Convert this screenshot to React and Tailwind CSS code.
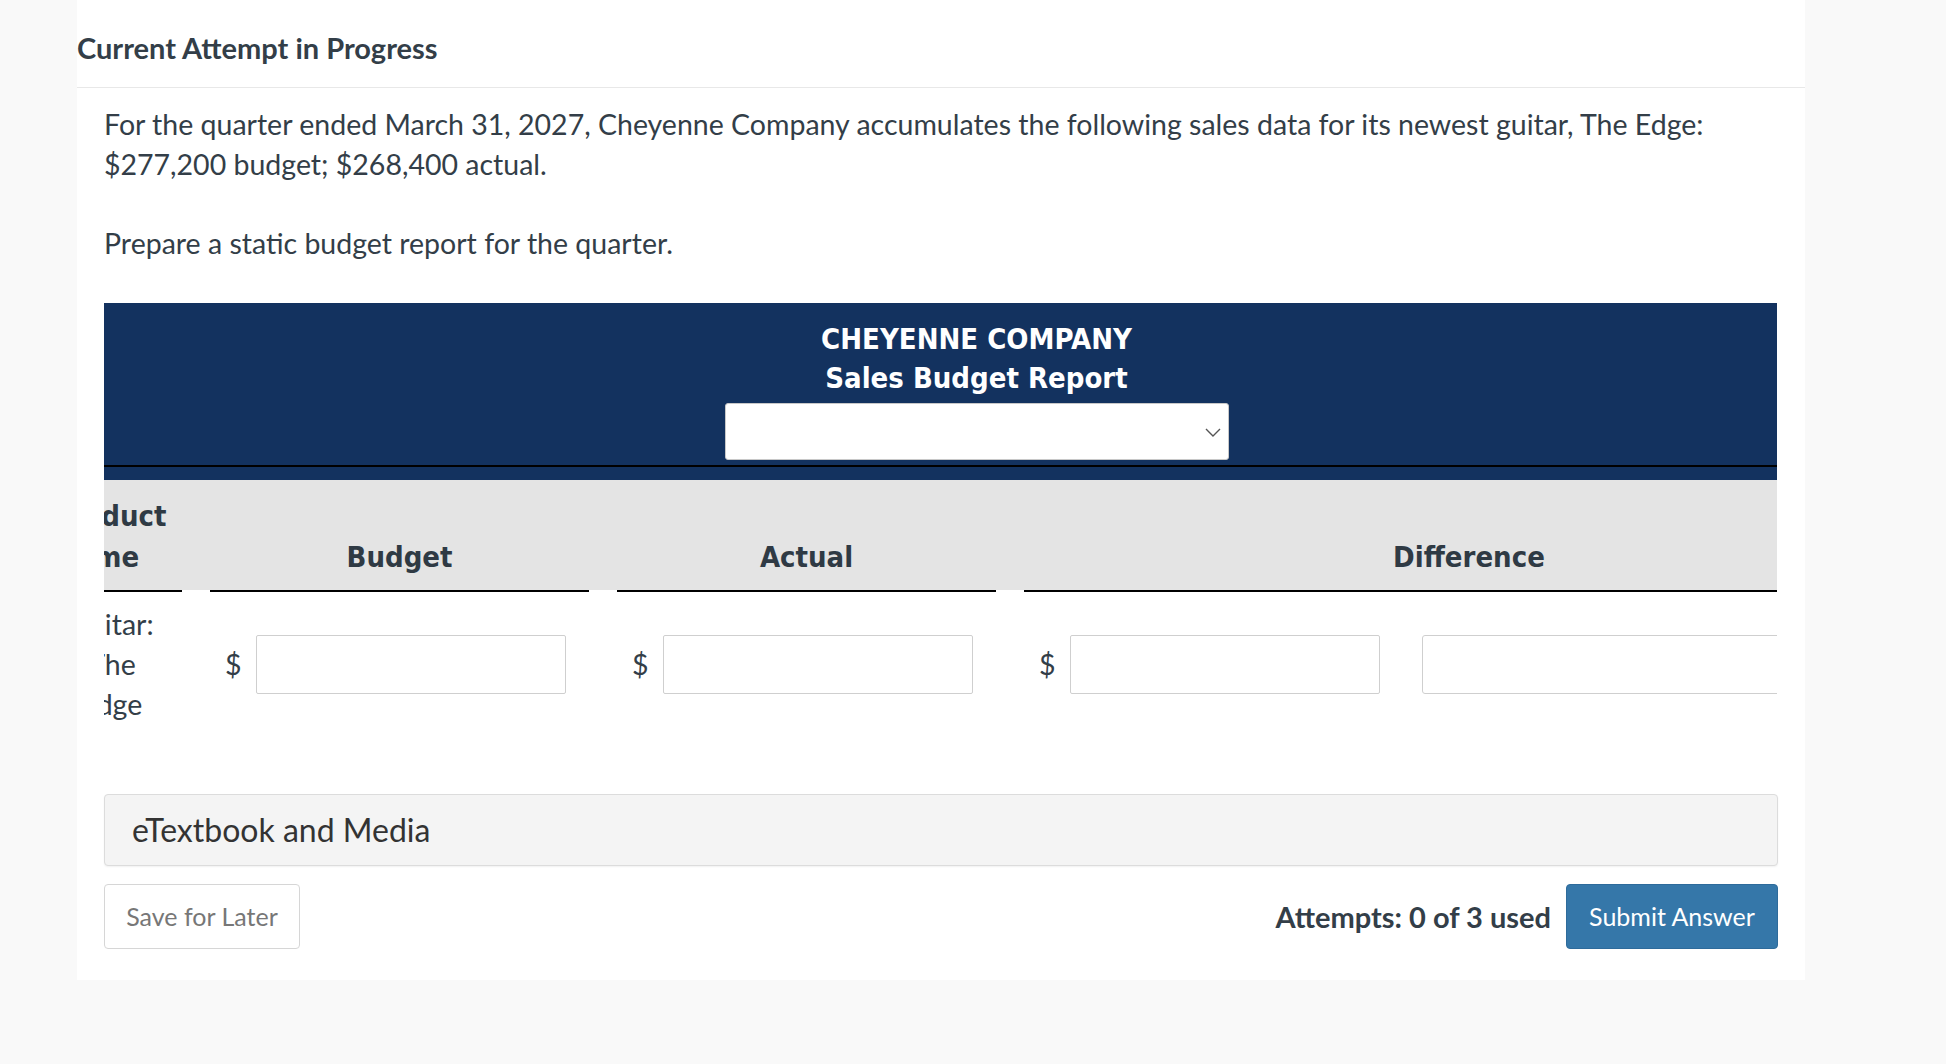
export default function App() {
  return (
    <div className="min-h-[1064px] bg-[#f9f9f9] font-['Lato',sans-serif] text-[#333e48]">
      <div className="ml-[77px] w-[1728px] bg-white pb-[31px]">
        <div className="h-[88px] border-b border-[#e8e8e8] pt-[31px]">
          <h2 className="text-[29px] font-bold leading-[34px]">Current Attempt in Progress</h2>
        </div>

        <div className="px-[27px] pt-[16px]">
          <p className="text-[28.5px] leading-[40px]">
            For the quarter ended March 31, 2027, Cheyenne Company accumulates the following sales data for its newest guitar, The Edge: $277,200 budget; $268,400 actual.
          </p>
          <p className="mt-[39px] text-[28.5px] leading-[40px]">Prepare a static budget report for the quarter.</p>

          <ReportTable />

          <div className="mt-[70px] flex h-[72px] items-center rounded-[4px] border border-[#dcdcdc] bg-[#f4f4f4] pl-[27px] shadow-[0_1px_2px_rgba(0,0,0,0.06)]">
            <span className="text-[32px] text-[#333]">eTextbook and Media</span>
          </div>

          <div className="mt-[18px] flex items-center justify-between">
            <button className="h-[65px] w-[196px] rounded-[4px] border border-[#d6d6d6] bg-white text-[25px] text-[#777]">
              Save for Later
            </button>
            <div className="flex items-center gap-[15px]">
              <span className="text-[29px] font-bold">Attempts: 0 of 3 used</span>
              <button className="h-[65px] w-[212px] rounded-[4px] border border-[#2e6b9b] bg-[#3577a9] text-[25px] text-white">
                Submit Answer
              </button>
            </div>
          </div>
        </div>
      </div>
    </div>
  );
}

function ReportTable() {
  const head = "font-['DejaVu_Sans',sans-serif] font-stretch-condensed font-bold text-[29px] leading-[41px] text-[#2f3a44]";
  return (
    <div className="mt-[40px] w-[1673px] overflow-hidden">
      <div className="bg-[#13325f] pb-[13px]">
        <div className="flex flex-col items-center border-b-2 border-black pb-[5px] pl-[72px] pt-[17px]">
          <div className="font-['DejaVu_Sans',sans-serif] font-stretch-condensed text-[29px] font-bold leading-[39px] text-white">
            CHEYENNE COMPANY
          </div>
          <div className="font-['DejaVu_Sans',sans-serif] font-stretch-condensed text-[29px] font-bold leading-[39px] text-white">
            Sales Budget Report
          </div>
          <div className="mt-[5px] flex h-[57px] w-[504px] items-center justify-end rounded-[3px] border border-[#c8c8c8] bg-white pr-[6px]">
            <svg width="18" height="12" viewBox="0 0 18 12" fill="none" stroke="#555" strokeWidth="1.4">
              <path d="M2 3l7 7 7-7" />
            </svg>
          </div>
        </div>
      </div>

      <div className="bg-[#e4e4e4] pb-[12px] pt-[16px]">
        <div className="grid grid-cols-[78px_379px_379px_890px] items-end gap-x-[28px]">
          <div className="overflow-hidden">
            <div className={`-ml-[76px] w-[154px] text-center ${head}`}>
              <div className="pl-[8px]">Product</div>
              <div className="pr-[16px]">Name</div>
            </div>
          </div>
          <div className={`text-center ${head}`}>Budget</div>
          <div className={`text-center ${head}`}>Actual</div>
          <div className={`text-center ${head}`}>Difference</div>
        </div>
      </div>
      <div className="grid h-[2px] grid-cols-[78px_379px_379px_890px] gap-x-[28px]">
        <div className="bg-black" />
        <div className="bg-black" />
        <div className="bg-black" />
        <div className="bg-black" />
      </div>

      <div className="grid grid-cols-[78px_379px_379px_890px] items-center gap-x-[28px] pt-[12px]">
        <div className="overflow-hidden">
          <div className="-ml-[70px] w-[154px] text-center text-[28.5px] leading-[40px]">
            <div>Guitar:</div>
            <div className="pl-[2px]">The</div>
            <div className="pl-[1px]">Edge</div>
          </div>
        </div>
        <MoneyCell />
        <MoneyCell />
        <div className="flex items-center">
          <MoneyCell />
          <input className="ml-[19px] h-[59px] w-[400px] shrink-0 rounded-[3px] border border-[#cfcfcf] bg-white" />
        </div>
      </div>
    </div>
  );
}

function MoneyCell() {
  return (
    <div className="flex w-[379px] shrink-0 items-center gap-[14px] pl-[15px]">
      <span className="text-[28.5px]">$</span>
      <input className="h-[59px] w-[310px] rounded-[2px] border border-[#cfcfcf] bg-white" />
    </div>
  );
}
